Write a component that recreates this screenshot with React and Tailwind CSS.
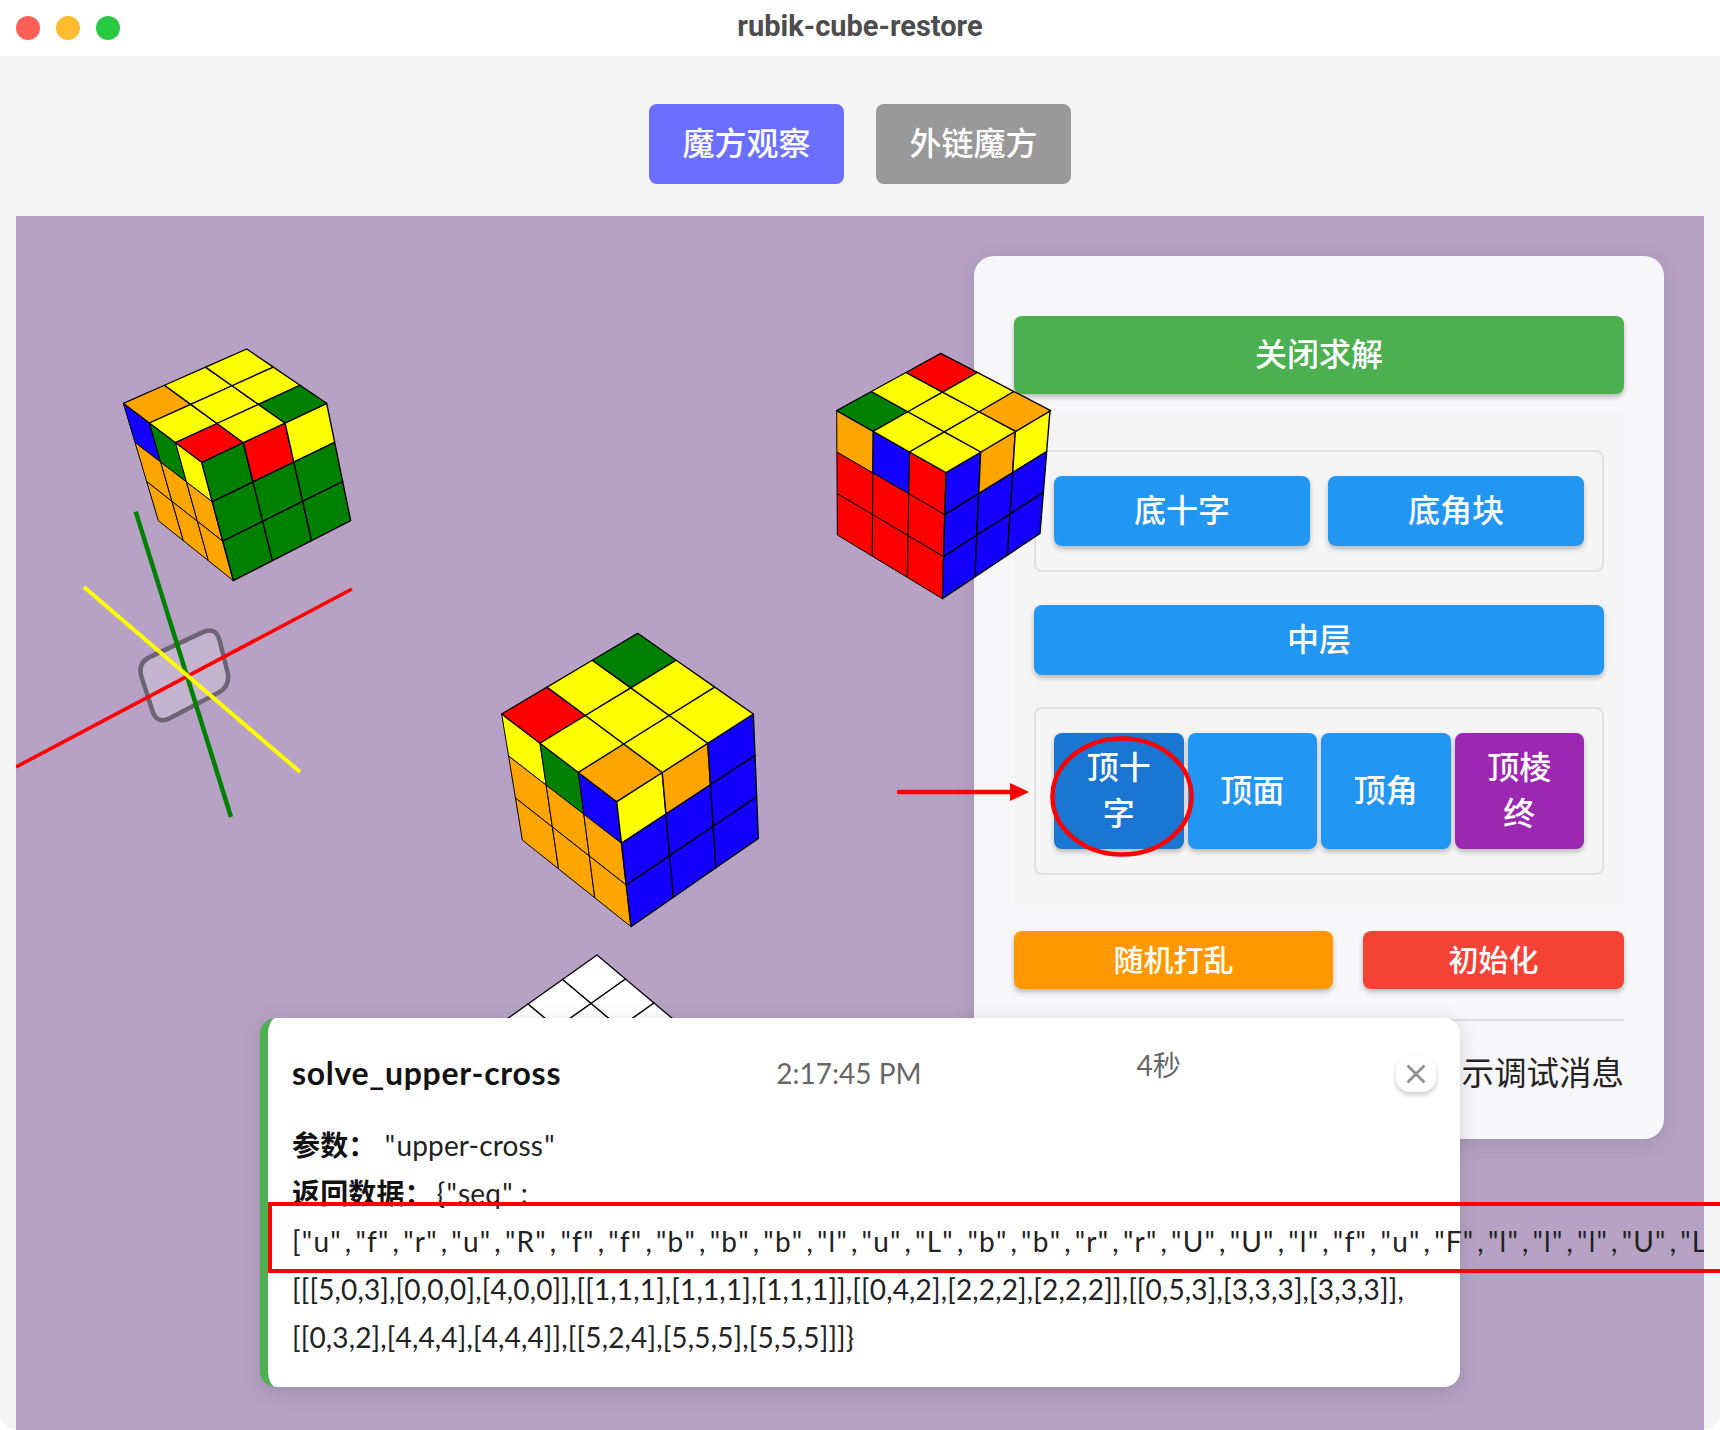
import React from "react";

const C = { Y: "#ffff00", R: "#ff0000", G: "#008000", B: "#1400ff", O: "#ffa500", W: "#ffffff" };

function pt(quad, u, v) {
  const [a, b, c, d] = quad;
  const x = (1 - v) * ((1 - u) * a[0] + u * b[0]) + v * ((1 - u) * d[0] + u * c[0]);
  const y = (1 - v) * ((1 - u) * a[1] + u * b[1]) + v * ((1 - u) * d[1] + u * c[1]);
  return [x, y];
}

function Face({ quad, cells, sw = 1.3 }) {
  const n = cells.length;
  const m = cells[0].length;
  const out = [];
  for (let r = 0; r < n; r++) {
    for (let k = 0; k < m; k++) {
      const p = [pt(quad, k / m, r / n), pt(quad, (k + 1) / m, r / n), pt(quad, (k + 1) / m, (r + 1) / n), pt(quad, k / m, (r + 1) / n)];
      out.push(
        <polygon key={r + "-" + k} points={p.map((q) => q.join(",")).join(" ")} fill={C[cells[r][k]]} stroke="#000" strokeWidth={sw} strokeLinejoin="round" />
      );
    }
  }
  return <g>{out}</g>;
}

function Cube({ ox, oy, top, right, left, cTop, cRight, cLeft }) {
  const f = (q) => q.map(([x, y]) => [ox + x / 3, oy + y / 3]);
  return (
    <g>
      <Face quad={f(left)} cells={cLeft} sw={1} />
      <Face quad={f(right)} cells={cRight} sw={1.4} />
      <Face quad={f(top)} cells={cTop} sw={1.3} />
    </g>
  );
}

function roundedQuad(pts, r) {
  let d = "";
  for (let i = 0; i < pts.length; i++) {
    const p = pts[i];
    const prev = pts[(i + pts.length - 1) % pts.length];
    const next = pts[(i + 1) % pts.length];
    const l1 = Math.hypot(prev[0] - p[0], prev[1] - p[1]);
    const l2 = Math.hypot(next[0] - p[0], next[1] - p[1]);
    const a = [p[0] + ((prev[0] - p[0]) * r) / l1, p[1] + ((prev[1] - p[1]) * r) / l1];
    const b = [p[0] + ((next[0] - p[0]) * r) / l2, p[1] + ((next[1] - p[1]) * r) / l2];
    d += (i === 0 ? "M" : "L") + a.join(" ") + " Q" + p.join(" ") + " " + b.join(" ") + " ";
  }
  return d + "Z";
}

function Scene() {
  const apex = [597, 955];
  const lu = [-34.5, 24.5];
  const ru = [28.5, 24];
  const g = (i, j) => [apex[0] + i * lu[0] + j * ru[0], apex[1] + i * lu[1] + j * ru[1]];
  return (
    <svg viewBox="16 216 1688 1214" className="absolute inset-0 w-full h-full pointer-events-none">
      <path d={roundedQuad([[216, 626], [231, 686], [157, 725], [137, 663]], 15)} fill="rgba(255,255,255,0.2)" stroke="#6d6473" strokeWidth="4.5" />
      <line x1="135.7" y1="511.7" x2="231" y2="817" stroke="#008000" strokeWidth="4.5" />
      <line x1="16" y1="767" x2="352" y2="589" stroke="#ff0000" strokeWidth="3.6" />
      <line x1="84" y1="587" x2="300" y2="772" stroke="#ffff00" strokeWidth="4" />

      {[0, 1, 2].flatMap((i) =>
        [0, 1, 2].map((j) => (
          <polygon
            key={i + "w" + j}
            points={[g(i, j), g(i + 1, j), g(i + 1, j + 1), g(i, j + 1)].map((q) => q.join(",")).join(" ")}
            fill="#fff"
            stroke="#000"
            strokeWidth="1.3"
          />
        ))
      )}

      <Cube
        ox={100}
        oy={330}
        top={[[70, 220], [440, 57], [680, 220], [305, 397]]}
        right={[[305, 397], [680, 220], [752, 572], [400, 752]]}
        left={[[70, 220], [305, 397], [400, 752], [175, 572]]}
        cTop={["OYY", "YYY", "RYG"]}
        cRight={["GRY", "GGG", "GGG"]}
        cLeft={["BGY", "OOO", "OOO"]}
      />
      <Cube
        ox={820}
        oy={340}
        top={[[50, 212], [362, 40], [692, 212], [378, 398]]}
        right={[[378, 398], [690, 212], [660, 580], [367, 776]]}
        left={[[50, 212], [378, 398], [367, 776], [52, 585]]}
        cTop={["GYR", "YYY", "YYO"]}
        cRight={["BOY", "BBB", "BBB"]}
        cLeft={["OBR", "RRR", "RRR"]}
      />
      <Cube
        ox={490}
        oy={620}
        top={[[35, 282], [443, 40], [790, 282], [380, 545]]}
        right={[[380, 545], [790, 282], [805, 655], [423, 920]]}
        left={[[35, 282], [380, 545], [423, 920], [97, 660]]}
        cTop={["RYG", "YYY", "OYY"]}
        cRight={["YOB", "BBB", "BBB"]}
        cLeft={["YGB", "OOO", "OOO"]}
      />
    </svg>
  );
}

const cjk = "font-['Roboto','Noto_Sans_CJK_SC',sans-serif]";
const body = "font-['Lato','Noto_Sans_CJK_SC',sans-serif]";

function Btn({ className, children }) {
  return (
    <button className={"flex items-center justify-center rounded-[8px] text-white font-medium shadow-[0_3px_5px_rgba(0,0,0,0.25)] " + className}>
      {children}
    </button>
  );
}

function Q() {
  return <span className="inline-block w-[12.7px] text-center">"</span>;
}

function Comma() {
  return <span className="inline-block w-[12.45px] text-center">,</span>;
}

const seq = "u f r u R f f b b b l u L b b r r U U l f u F l l l U".split(" ");

export default function App() {
  return (
    <div className={"relative w-[1720px] h-[1430px] overflow-hidden rounded-[16px] bg-[#f5f5f5] flex flex-col " + cjk}>
      <header className="h-[56px] shrink-0 bg-white grid grid-cols-3 items-center px-[16px]">
        <div className="flex gap-[16px]">
          <span className="w-[24px] h-[24px] rounded-full bg-[#ff5f57]" />
          <span className="w-[24px] h-[24px] rounded-full bg-[#febc2e]" />
          <span className="w-[24px] h-[24px] rounded-full bg-[#28c840]" />
        </div>
        <div className="text-center text-[29px] -mt-[2px] font-bold text-[#4d4d4d] whitespace-nowrap">rubik-cube-restore</div>
      </header>

      <nav className="h-[160px] shrink-0 flex items-center justify-center gap-[32px] pt-[16px]">
        <button className="w-[195px] h-[80px] rounded-[8px] bg-[#6b6fff] text-white font-medium text-[32px]">魔方观察</button>
        <button className="w-[195px] h-[80px] rounded-[8px] bg-[#999999] text-white font-medium text-[32px]">外链魔方</button>
      </nav>

      <main className="relative ml-[16px] mr-[16px] flex-1 bg-[#b7a2c5] overflow-hidden">
        <aside className="absolute top-[40px] right-[40px] w-[690px] h-[883px] rounded-[20px] bg-[#f7f6f9] px-[40px] pt-[60px] shadow-[0_4px_20px_rgba(0,0,0,0.12)]">
          <Btn className="w-full h-[78px] bg-[#4caf50] text-[32px]">关闭求解</Btn>
          <section className="mt-[19px] h-[498px] rounded-[8px] bg-[#f5f5f5] px-[20px] pt-[37px]">
            <div className="flex gap-[18px] rounded-[8px] border-2 border-[#e0e0e0] px-[18px] py-[24px]">
              <Btn className="flex-1 h-[70px] bg-[#2196f3] text-[32px]">底十字</Btn>
              <Btn className="flex-1 h-[70px] bg-[#2196f3] text-[32px]">底角块</Btn>
            </div>
            <Btn className="mt-[33px] w-full h-[70px] bg-[#2196f3] text-[32px]">中层</Btn>
            <div className="mt-[32px] flex gap-[4px] rounded-[8px] border-2 border-[#e0e0e0] px-[18px] py-[24px]">
              <Btn className="flex-1 h-[116px] bg-[#1976d2] text-[32px] leading-[46px] px-[20px]">顶十字</Btn>
              <Btn className="flex-1 h-[116px] bg-[#2196f3] text-[32px] leading-[46px] px-[20px]">顶面</Btn>
              <Btn className="flex-1 h-[116px] bg-[#2196f3] text-[32px] leading-[46px] px-[20px]">顶角</Btn>
              <Btn className="flex-1 h-[116px] bg-[#9c27b0] text-[32px] leading-[46px] px-[20px]">顶棱终</Btn>
            </div>
          </section>
          <div className="mt-[20px] flex justify-between">
            <Btn className="w-[319px] h-[58px] bg-[#ff9800] text-[30px]">随机打乱</Btn>
            <Btn className="w-[261px] h-[58px] bg-[#f44336] text-[30px]">初始化</Btn>
          </div>
          <div className="mt-[30px] h-[2px] bg-[#e0e0e0]" />
          <div className="mt-[30px] flex justify-end text-[32.5px] leading-[46px] text-[#222222]">
            <span className="mr-[4px]">显</span>示调试消息
          </div>
        </aside>

        <Scene />

        <div className={"absolute left-[244px] top-[802px] w-[1200px] h-[369px] rounded-[16px] border-l-[8px] border-[#4caf50] bg-white px-[24px] pt-[34px] shadow-[0_4px_20px_rgba(0,0,0,0.15)] " + body}>
          <div className="flex justify-between items-start">
            <div className="text-[32px] leading-[42px] tracking-[0.7px] font-bold text-[#111111]">solve_upper-cross</div>
            <div className="text-[28px] leading-[40px] mt-[1px] text-[#666666]">2:17:45 PM</div>
            <div className="text-[28px] leading-[40px] text-[#666666] -mt-[7px]">4秒</div>
            <button className="w-[40px] h-[36px] mt-[4px] rounded-[14px] bg-white shadow-[0_3px_5px_rgba(0,0,0,0.2)] flex items-center justify-center">
              <svg width="20" height="20" viewBox="0 0 20 20" fill="none" stroke="#909090" strokeWidth="2.8">
                <path d="M1.5 1.5 L18.5 18.5 M18.5 1.5 L1.5 18.5" />
              </svg>
            </button>
          </div>
          <div className="mt-[27px] text-[28px] leading-[48px] tracking-[0.15px] text-[#222222] whitespace-nowrap">
            <div><b className="font-bold text-[#111111]">参数：</b> <Q />upper-cross<Q /></div>
            <div><b className="font-bold text-[#111111] mr-[4px]">返回数据：</b>{"{"}<Q />seq<Q /><span className="ml-[7px]">:</span></div>
            <div>
              [
              {seq.map((s, i) => (
                <span key={i}><Q />{s}<Q /><Comma /></span>
              ))}
              <Q />L
            </div>
            <div>{'[[[5,0,3],[0,0,0],[4,0,0]],[[1,1,1],[1,1,1],[1,1,1]],[[0,4,2],[2,2,2],[2,2,2]],[[0,5,3],[3,3,3],[3,3,3]],'}</div>
            <div>{'[[0,3,2],[4,4,4],[4,4,4]],[[5,2,4],[5,5,5],[5,5,5]]]}'}</div>
          </div>
        </div>
      </main>

      {/* screenshot annotations */}
      <div className="absolute left-[268px] top-[1202px] w-[1460px] h-[71px] border-[4px] border-[#ff0000] pointer-events-none" />
      <svg className="absolute left-[890px] top-[730px] pointer-events-none" width="310" height="130" viewBox="890 730 310 130" fill="none">
        <ellipse cx="1122" cy="796.5" rx="69.5" ry="58" stroke="#ff0000" strokeWidth="4.5" />
        <path d="M899 792 H1018" stroke="#ff0000" strokeWidth="4.5" strokeLinecap="round" />
        <path d="M1010 783 L1029 792 L1010 801 Z" fill="#ff0000" />
      </svg>
    </div>
  );
}
